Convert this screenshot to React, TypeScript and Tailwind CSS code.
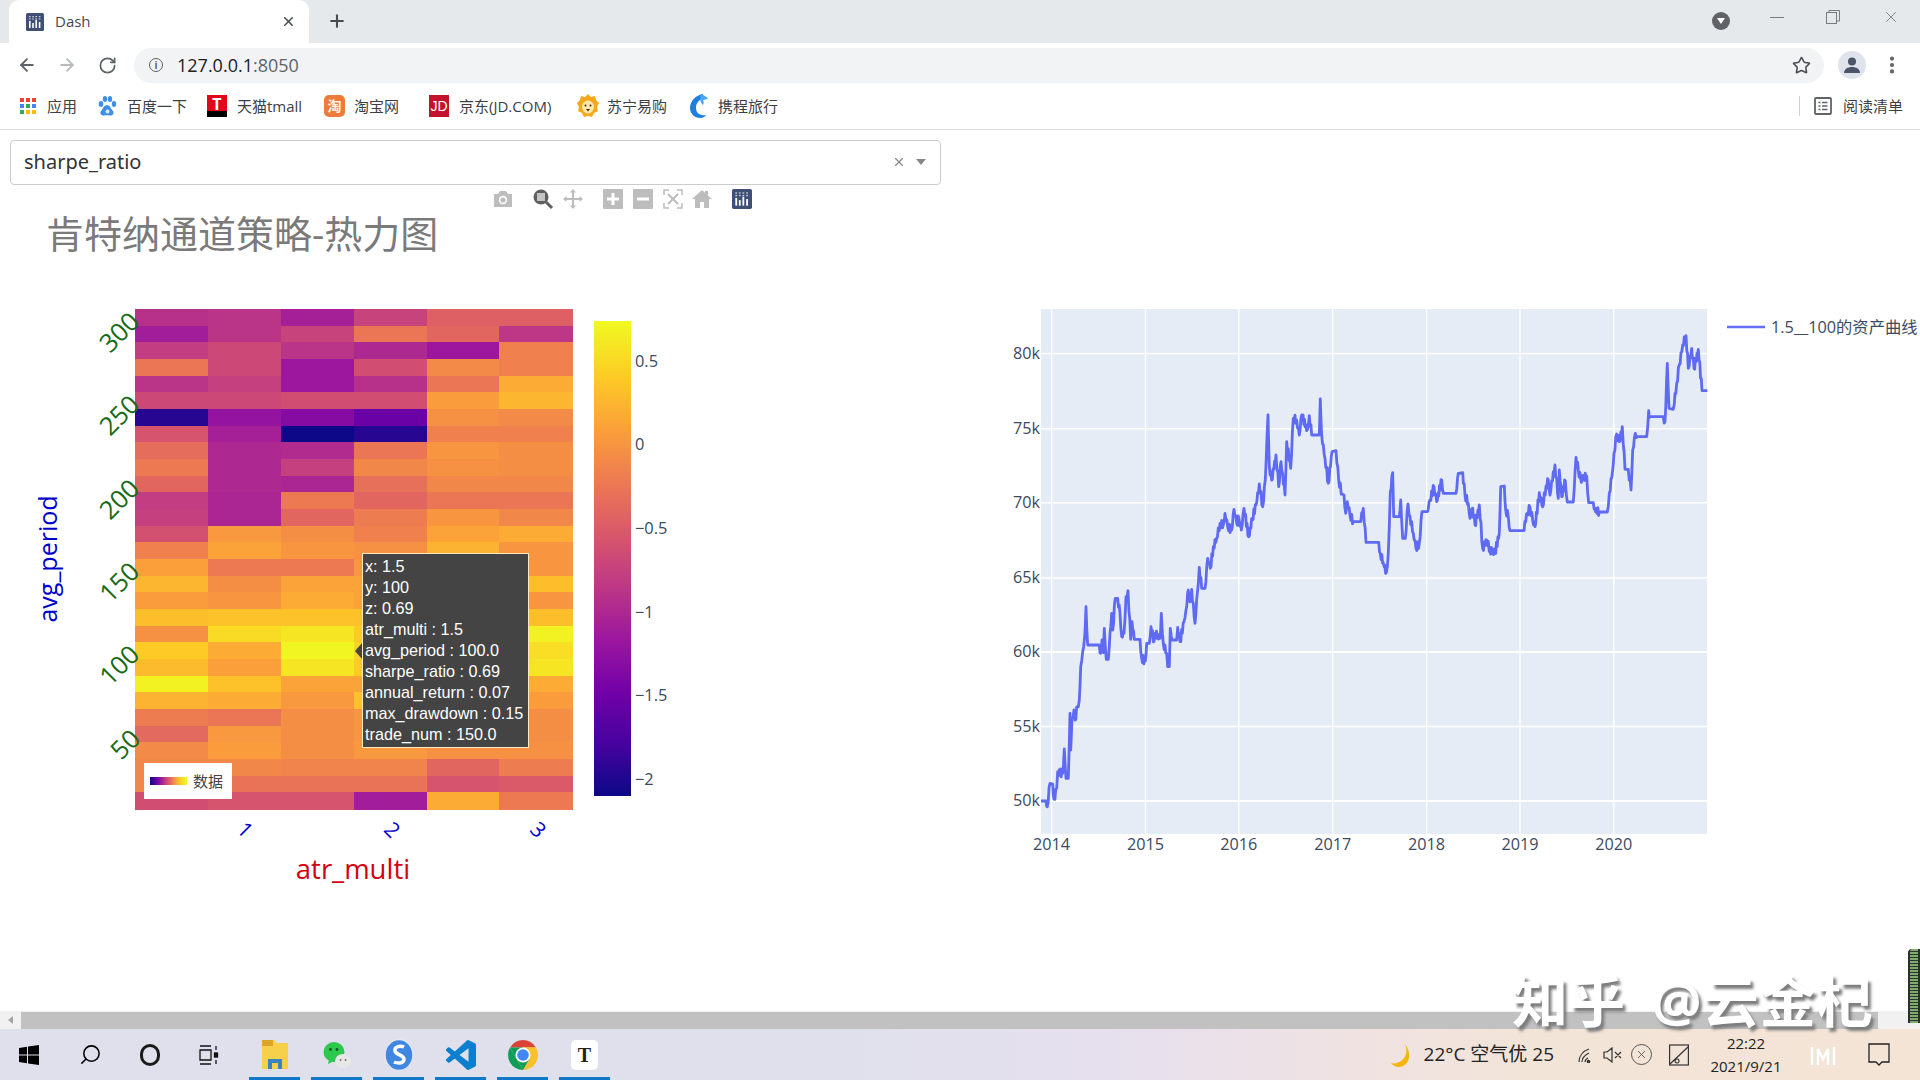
import React from "react";
import { ArrowLeft, ArrowRight, RotateCw, Star, MoreVertical, X, Search, Plus } from "lucide-react";

const PLASMA = ["#0d0887", "#46039f", "#7201a8", "#9c179e", "#bd3786", "#d8576b", "#ed7953", "#fb9f3a", "#fdca26", "#f0f921"];
const STOPS = [0, 0.11, 0.22, 0.33, 0.44, 0.55, 0.66, 0.77, 0.88, 1];
function hex(c: string) {
  return [1, 3, 5].map((i) => parseInt(c.slice(i, i + 2), 16));
}
function plasma(t: number) {
  let i = 0;
  while (i < STOPS.length - 2 && t > STOPS[i + 1]) i++;
  const f = Math.max(0, Math.min(1, (t - STOPS[i]) / (STOPS[i + 1] - STOPS[i])));
  const a = hex(PLASMA[i]);
  const b = hex(PLASMA[i + 1]);
  return `rgb(${a.map((v, k) => Math.round(v + (b[k] - v) * f)).join(",")})`;
}

const HEAT: number[][] = [
  [0.42, 0.43, 0.36, 0.48, 0.58, 0.58],
  [0.35, 0.43, 0.48, 0.65, 0.6, 0.44],
  [0.46, 0.5, 0.43, 0.39, 0.33, 0.68],
  [0.65, 0.5, 0.33, 0.52, 0.71, 0.68],
  [0.43, 0.47, 0.33, 0.42, 0.65, 0.8],
  [0.5, 0.5, 0.52, 0.52, 0.76, 0.83],
  [0.05, 0.31, 0.27, 0.2, 0.73, 0.71],
  [0.54, 0.36, 0.0, 0.05, 0.68, 0.68],
  [0.62, 0.39, 0.4, 0.65, 0.74, 0.72],
  [0.66, 0.39, 0.47, 0.7, 0.73, 0.72],
  [0.6, 0.39, 0.38, 0.63, 0.7, 0.7],
  [0.46, 0.38, 0.66, 0.6, 0.65, 0.65],
  [0.47, 0.38, 0.6, 0.67, 0.74, 0.7],
  [0.53, 0.75, 0.72, 0.68, 0.78, 0.8],
  [0.68, 0.78, 0.74, 0.73, 0.82, 0.74],
  [0.77, 0.66, 0.66, 0.74, 0.76, 0.74],
  [0.83, 0.72, 0.78, 0.78, 0.8, 0.85],
  [0.76, 0.74, 0.8, 0.78, 0.8, 0.74],
  [0.85, 0.86, 0.86, 0.86, 0.88, 0.85],
  [0.73, 0.92, 0.95, 0.88, 0.9, 0.98],
  [0.88, 0.8, 0.99, 0.9, 0.9, 0.93],
  [0.84, 0.77, 0.95, 0.88, 0.9, 0.95],
  [0.98, 0.86, 0.78, 0.78, 0.8, 0.8],
  [0.82, 0.8, 0.75, 0.86, 0.78, 0.76],
  [0.67, 0.65, 0.72, 0.74, 0.74, 0.72],
  [0.61, 0.75, 0.72, 0.74, 0.74, 0.72],
  [0.71, 0.76, 0.72, 0.75, 0.73, 0.73],
  [0.7, 0.7, 0.69, 0.69, 0.6, 0.67],
  [0.7, 0.64, 0.64, 0.64, 0.54, 0.56],
  [0.52, 0.54, 0.54, 0.35, 0.8, 0.66],
];

const SEG_A = [3,1263,18,1263,22,1280,30,1210,38,1212,42,1258,50,1225,53,1175,68,1180,73,1107,78,1195,85,1195,90,1000,92,1110,96,1015,102,990,105,1020,112,980,118,960,122,860,128,815,134,770,138,680,143,795,178,795,182,820,186,780,190,818,193,745,199,838,205,838,210,760,215,700,218,750,226,655,233,655,240,700,245,770,252,760,258,650,264,632,272,778,276,725,283,778,300,778,305,835,316,843,320,790,328,790,333,740,342,785,345,760,360,775,364,700,370,790,380,820,383,860,388,860,391,745,396,780,410,780,413,742,420,785,432,725,438,690,445,630,450,665,455,628,465,730,472,640,478,562,485,625,495,625,503,535,511,565,520,500,530,475,540,430,550,435,555,400,563,440,575,450,582,388,590,430,597,415,604,450,612,385,626,470,637,415,648,375,658,312,668,380,676,300,684,105,688,260,695,300,708,225,716,320];
const SEG_B = [33,245,45,345,50,185,62,265,70,115,80,120,88,165,95,105,112,150,118,107,125,165,148,165,151,57,155,165,165,235,175,310,186,215,198,212,206,300,216,342,222,345,227,400,232,365,240,405,250,425,270,425,280,385,288,487,326,487,331,520,340,548,349,578,355,520,361,335,368,278,371,410,388,410,392,360,398,475,406,475,414,372,420,410,430,460,438,505,448,490,456,395,472,395,480,360,492,320,500,365,515,300,520,340,558,340,565,280,578,278,585,345,595,370,600,415,608,385,615,435,628,375,638,505,650,480,660,510,675,518,688,460,692,320,703,318];
const SEG_C = [47,570,55,590,60,632,100,632,112,580,120,562,128,600,135,620,148,518,158,560,168,498,175,480,180,525,190,455,195,435,205,535,208,450,215,530,226,482,232,546,250,546,258,412,265,450,272,478,290,468,296,548,310,548,315,568,328,576,352,576,358,520,368,450,372,400,380,342,388,365,397,320,405,448,415,448,423,510,428,390,436,340,442,350,470,350,476,272,480,290,520,290,525,305,532,130,537,265,550,268,560,190,568,135,578,75,588,47,595,145,605,85,612,145,625,88,636,212,652,212];

function toPts(seg: number[], ox: number, oy: number): [number, number][] {
  const out: [number, number][] = [];
  for (let i = 0; i < seg.length; i += 2) out.push([ox + seg[i] / 3, oy + seg[i + 1] / 3]);
  return out;
}
function jag(points: [number, number][]) {
  const out: string[] = [];
  let n = 0;
  points.forEach(([x, y], i) => {
    if (i > 0) {
      const [px, py] = points[i - 1];
      const dx = x - px;
      const dy = y - py;
      if (Math.abs(dy) > 1 && dx > 1) {
        const steps = Math.max(2, Math.floor(dx / 0.7));
        for (let s = 1; s < steps; s++) {
          n++;
          const f = s / steps;
          const noise = (1.5 + Math.abs(Math.sin(n * 12.9898)) * 2.5) * (s % 2 ? 1 : -1);
          out.push(`${(px + dx * f).toFixed(1)},${(py + dy * f + noise).toFixed(1)}`);
        }
      }
    }
    out.push(`${x.toFixed(1)},${y.toFixed(1)}`);
  });
  return out.join(" ");
}
const LINE = jag([...toPts(SEG_A, 1040, 380), ...toPts(SEG_B, 1270, 380), ...toPts(SEG_C, 1490, 320)]);

function AppGrid() {
  const c = ["#ea4335", "#ea4335", "#ea4335", "#4285f4", "#34a853", "#4285f4", "#34a853", "#fbbc04", "#fbbc04"];
  return (
    <div className="grid grid-cols-3 gap-[2px] w-[16px]">
      {c.map((col, i) => (
        <span key={i} className="w-[4px] h-[4px]" style={{ background: col }} />
      ))}
    </div>
  );
}

function PlotlyLogo({ size = 18 }: { size?: number }) {
  return (
    <svg width={size} height={size} viewBox="0 0 18 18">
      <rect width="18" height="18" rx="1.5" fill="#3f4f75" />
      <g fill="#fff">
        <rect x="3" y="8" width="1.6" height="7" />
        <rect x="6.2" y="10" width="1.6" height="5" />
        <rect x="9.4" y="7" width="1.6" height="8" />
        <rect x="12.8" y="9" width="1.6" height="6" />
        {[3, 6.2, 9.4, 12.8].map((x) => (
          <g key={x}>
            <rect x={x} y="3" width="1.6" height="1.2" opacity="0.7" />
            <rect x={x} y="5.3" width="1.6" height="1.2" opacity="0.7" />
          </g>
        ))}
      </g>
    </svg>
  );
}

function Baidu() {
  return (
    <svg width="20" height="22" viewBox="0 0 20 22" fill="#3f8fe8">
      <ellipse cx="4" cy="9" rx="2.3" ry="3" />
      <ellipse cx="8" cy="4" rx="2.2" ry="3" />
      <ellipse cx="13" cy="4" rx="2.2" ry="3" />
      <ellipse cx="17" cy="9" rx="2.2" ry="3" />
      <path d="M10 10c-3 0-4 4-6 6-1.500 2 0 5 3 4.500 2-.4 4-.4 6 0 3 .5 4.500-2.500 3-4.500-2-2-3-6-6-6z" />
      <circle cx="10.500" cy="16.500" r="2" fill="#dceafc" />
    </svg>
  );
}

function TmallT() {
  return (
    <div className="w-[20px] h-[22px] bg-[linear-gradient(#e3061b_0_72%,#000_72%)] flex justify-center pt-[1px] text-white font-bold text-[16px] leading-[16px]">
      T
    </div>
  );
}

function Taobao() {
  return (
    <div className="w-[21px] h-[22px] rounded-[5px] bg-[#ef7b3a] flex items-center justify-center text-[#fff2e0] text-[14px] leading-none font-bold">
      淘
    </div>
  );
}

function JD() {
  return (
    <div className="w-[20px] h-[22px] bg-[#c3142b] flex items-center justify-center text-white text-[14px] leading-none font-['Liberation_Sans',sans-serif]">
      JD
    </div>
  );
}

function Suning() {
  return (
    <svg width="22" height="24" viewBox="0 0 22 24">
      <path d="M11 0l3 3 4-1 1 4 3 3-2 4 1 4-4 2-2 4-4-1-4 1-2-4-4-2 1-4-2-4 3-3 1-4 4 1z" fill="#f6a81c" />
      <ellipse cx="11" cy="13" rx="6" ry="6.500" fill="#fde7a8" />
      <circle cx="8.500" cy="11.500" r="1" fill="#3a2a10" />
      <circle cx="13.500" cy="11.500" r="1" fill="#3a2a10" />
      <path d="M9 15h4l-2 2.500z" fill="#3a2a10" />
    </svg>
  );
}

function Ctrip() {
  return (
    <svg width="22" height="26" viewBox="0 0 22 26">
      <path d="M16 1c-7 1-13 7-13 14 0 6 5 10 10 10 3 0 5-1 6-3-6 1-10-2-10-7 0-5 3-8 7-10z" fill="#1f7fe0" />
      <path d="M14 1c3 1 6 3 7 5l-5 1c1 2 1 3 0 5-2-2-4-5-2-11z" fill="#4aa6f5" />
    </svg>
  );
}

function Bookmark({ icon, label, w }: { icon: React.ReactNode; label: string; w: string }) {
  return (
    <div className={`flex items-center shrink-0 ${w}`}>
      {icon}
      <span className="text-[15px] text-[#3c4043] whitespace-nowrap">{label}</span>
    </div>
  );
}

function WeChat() {
  return (
    <svg width="30" height="30" viewBox="0 0 30 30">
      <ellipse cx="12" cy="12" rx="10.500" ry="10" fill="#2dc84d" />
      <path d="M7 19l-1 5 6-3z" fill="#2dc84d" />
      <circle cx="8.500" cy="9.500" r="1.400" fill="#0b5a1d" />
      <circle cx="15" cy="9.500" r="1.400" fill="#0b5a1d" />
      <ellipse cx="21" cy="21" rx="8" ry="7" fill="#e7e7e7" />
      <circle cx="18.500" cy="20" r="1" fill="#777" />
      <circle cx="23.500" cy="20" r="1" fill="#777" />
    </svg>
  );
}

function Chrome() {
  return (
    <svg width="30" height="30" viewBox="-15 -15 30 30">
      <path d="M-12.990 -7.500A15 15 0 0 1 12.990 -7.500L0 -7.500z" fill="#db4437" />
      <path d="M0 -7.500L12.990 -7.500A15 15 0 0 1 0 15L6.500 3.750z" fill="#fbc02d" />
      <path d="M0 15A15 15 0 0 1 -12.990 -7.500L-6.500 3.750z" fill="#0f9d58" />
      <path d="M-12.990 -7.500L0 -7.500L-6.500 3.750z" fill="#0f9d58" />
      <path d="M0 -7.500L12.990 -7.500L6.500 3.750z" fill="#fbc02d" />
      <path d="M0 15L6.500 3.750L-6.500 3.750z" fill="#0f9d58" />
      <circle r="7.500" fill="#fff" />
      <circle r="5.800" fill="#4285f4" />
    </svg>
  );
}

function TaskIcon({ children, active = true, w = "w-[51px]", mr = "mr-[11px]" }: { children: React.ReactNode; active?: boolean; w?: string; mr?: string }) {
  return (
    <div className={`relative flex items-center justify-center h-[51px] ${w} ${mr}`}>
      {children}
      {active && <span className="absolute bottom-0 left-0 right-0 h-[3px] bg-[#0f78c8]" />}
    </div>
  );
}

const CELL_W = 437.3 / 6;
const CELL_H = 500 / 30;

function Heatmap() {
  return (
    <div className="relative w-[960px] h-[610px] shrink-0">
      <svg width="960" height="610" viewBox="0 290 960 610" className="block">
        <defs>
          <linearGradient id="cb" x1="0" y1="1" x2="0" y2="0">
            {PLASMA.map((c, i) => (
              <stop key={i} offset={STOPS[i]} stopColor={c} />
            ))}
          </linearGradient>
        </defs>
        <g shapeRendering="crispEdges">
          {HEAT.map((row, r) =>
            row.map((v, c) => (
              <rect key={`${r}-${c}`} x={135 + c * CELL_W} y={309 + r * CELL_H} width={CELL_W + 0.5} height={CELL_H + 0.5} fill={plasma(v)} />
            ))
          )}
        </g>
        <rect x="594" y="321" width="37" height="475" fill="url(#cb)" />
        {[["0.5", 362], ["0", 445], ["−0.5", 529], ["−1", 613], ["−1.5", 696], ["−2", 780]].map(([t, y]) => (
          <text key={t as string} x="635" y={(y as number) + 5} fontSize="16.4" fill="#3b4a60">
            {t}
          </text>
        ))}
        {[["300", 120, 333], ["250", 120, 416], ["200", 120, 500], ["150", 120, 583], ["100", 120, 666], ["50", 126, 745]].map(([t, x, y]) => (
          <text key={t as string} x={x as number} y={(y as number) + 8} fontSize="25.5" fill="#176b17" textAnchor="middle" transform={`rotate(-45 ${x} ${y})`}>
            {t}
          </text>
        ))}
        {[["1", 245], ["2", 392], ["3", 538]].map(([t, x]) => (
          <text key={t as string} x={x as number} y="837" fontSize="21" fill="#0000cd" textAnchor="middle" transform={`rotate(45 ${x} 830)`}>
            {t}
          </text>
        ))}
        <text x="353" y="879" fontSize="27.5" fill="#d4000f" textAnchor="middle">
          atr_multi
        </text>
        <text x="57" y="559" fontSize="25" fill="#0000cd" textAnchor="middle" transform="rotate(-90 57 559)">
          avg_period
        </text>
      </svg>
      <div className="absolute left-[144px] top-[473px] w-[88px] h-[36px] bg-white flex items-center pl-[6px] gap-[6px]">
        <span className="w-[37px] h-[8px] bg-[linear-gradient(90deg,#0d0887,#7201a8,#bd3786,#ed7953,#fdca26,#f0f921)]" />
        <span className="text-[15px] text-[#444]">数据</span>
      </div>
      <div className="absolute left-[362px] top-[263px] w-[167px] h-[195px] bg-[#444] border-[1.5px] border-[#fde8c0] pl-[2px] pt-[2px] text-white text-[16.2px] leading-[21px] font-['Liberation_Sans',sans-serif] whitespace-nowrap">
        <div>x: 1.5</div>
        <div>y: 100</div>
        <div>z: 0.69</div>
        <div>atr_multi : 1.5</div>
        <div>avg_period : 100.0</div>
        <div>sharpe_ratio : 0.69</div>
        <div>annual_return : 0.07</div>
        <div>max_drawdown : 0.15</div>
        <div>trade_num : 150.0</div>
      </div>
      <span className="absolute left-[355px] top-[353px] w-0 h-0 border-y-[8px] border-y-transparent border-r-[7px] border-r-[#444]" />
    </div>
  );
}

function LineChart() {
  const xs = [[2014, 1051.6], [2015, 1145.5], [2016, 1238.8], [2017, 1332.7], [2018, 1426.6], [2019, 1520], [2020, 1613.8]];
  const ys = [["80k", 353.6], ["75k", 428.7], ["70k", 502.7], ["65k", 578], ["60k", 652], ["55k", 726.5], ["50k", 801]];
  return (
    <svg width="960" height="610" viewBox="960 290 960 610" className="block shrink-0">
      <rect x="1041" y="309" width="666" height="525" fill="#e5ecf6" />
      {xs.map(([t, x]) => (
        <line key={t} x1={x} x2={x} y1="309" y2="834" stroke="#fff" strokeWidth="1.4" />
      ))}
      {ys.map(([t, y]) => (
        <line key={t as string} x1="1041" x2="1707" y1={y as number} y2={y as number} stroke="#fff" strokeWidth="1.4" />
      ))}
      <line x1="1041" x2="1707" y1="652" y2="652" stroke="#fff" strokeWidth="2" />
      <line x1="1041" x2="1707" y1="801" y2="801" stroke="#fff" strokeWidth="2" />
      <polyline points={LINE} fill="none" stroke="#5f6af2" strokeWidth="2.8" strokeLinejoin="round" />
      {ys.map(([t, y]) => (
        <text key={t as string} x="1040" y={(y as number) + 5} fontSize="16.2" fill="#3b4a60" textAnchor="end">
          {t}
        </text>
      ))}
      {xs.map(([t, x]) => (
        <text key={t} x={x} y="850" fontSize="16.2" fill="#3b4a60" textAnchor="middle">
          {t}
        </text>
      ))}
      <line x1="1727" x2="1765" y1="327" y2="327" stroke="#636efa" strokeWidth="2.6" />
      <text x="1771" y="333" fontSize="16.3" fill="#3b4a60">
        1.5__100的资产曲线
      </text>
    </svg>
  );
}

function ModeBar() {
  const g = "#bdbdbd";
  return (
    <div className="absolute left-[493px] top-[4px] flex items-center h-[20px]">
      <svg width="20" height="18" viewBox="0 0 20 18" className="mr-[19px]">
        <path d="M1 4h4l2-3h6l2 3h4v13H1z" fill={g} />
        <circle cx="10" cy="10" r="4.200" fill="#fff" />
        <circle cx="10" cy="10" r="2.600" fill={g} />
      </svg>
      <svg width="22" height="22" viewBox="0 0 22 22" className="mr-[9px]">
        <circle cx="9" cy="9" r="7.500" fill="#5f5f5f" />
        <rect x="5" y="5" width="8" height="8" fill="#c4c4c4" />
        <path d="M14 14l6 6" stroke="#5f5f5f" strokeWidth="3" />
      </svg>
      <svg width="20" height="20" viewBox="0 0 20 20" className="mr-[20px]" fill={g}>
        <path d="M10 0l3 3.500h-2V9h5.500V7L20 10l-3.500 3v-2H11v5.500h2L10 20l-3-3.500h2V11H3.500v2L0 10l3.500-3v2H9V3.500H7z" />
      </svg>
      <svg width="20" height="20" viewBox="0 0 20 20" className="mr-[10px]">
        <rect width="20" height="20" rx="1" fill={g} />
        <path d="M10 4v12M4 10h12" stroke="#fff" strokeWidth="3" />
      </svg>
      <svg width="20" height="20" viewBox="0 0 20 20" className="mr-[10px]">
        <rect width="20" height="20" rx="1" fill={g} />
        <path d="M4 10h12" stroke="#fff" strokeWidth="3" />
      </svg>
      <svg width="20" height="20" viewBox="0 0 20 20" className="mr-[9px]" fill="none" stroke={g} strokeWidth="1.500">
        <path d="M6 1H1v5M14 1h5v5M6 19H1v-5M14 19h5v-5" />
        <path d="M5 5l10 10M15 5L5 15" strokeWidth="2" />
      </svg>
      <svg width="20" height="18" viewBox="0 0 20 18" className="mr-[20px]" fill={g}>
        <path d="M10 0L0 9h3v9h5v-6h4v6h5V9h3l-4-3.600V1h-3v1.700z" />
      </svg>
      <PlotlyLogo size={20} />
    </div>
  );
}

export default function App() {
  return (
    <div className="relative w-[1920px] h-[1080px] overflow-hidden flex flex-col bg-white font-['Open_Sans','Noto_Sans_CJK_SC',sans-serif]">
      {/* tab strip */}
      <div className="h-[43px] bg-[#e6e9ec] flex items-end shrink-0 relative">
        <div className="ml-[9px] w-[300px] h-[43px] bg-white rounded-t-[10px] flex items-center pl-[17px] pr-[13px]">
          <PlotlyLogo size={18} />
          <span className="ml-[11px] text-[15px] text-[#45494d]">Dash</span>
          <X className="ml-auto w-[15px] h-[15px] text-[#45494d]" strokeWidth={2.4} />
        </div>
        <Plus className="absolute left-[327px] top-[11px] w-[20px] h-[20px] text-[#4a4d50]" strokeWidth={2.5} />
        <div className="ml-auto flex items-center h-[43px] pb-[4px]">
          <span className="w-[18px] h-[18px] rounded-full bg-[#5f6368] flex items-center justify-center mr-[40px] mt-[3px]">
            <span className="w-0 h-0 border-x-[4px] border-x-transparent border-t-[6px] border-t-white" />
          </span>
          <span className="w-[14px] h-[1px] bg-[#7a7d80] mr-[42px] mb-[5px]" />
          <svg width="14" height="14" viewBox="0 0 14 14" fill="none" stroke="#7a7d80" className="mr-[42px] mb-[5px]">
            <rect x="0.500" y="2.500" width="10" height="11" />
            <path d="M3 2.500V0.500h10.500V11H10.500" />
          </svg>
          <X className="w-[18px] h-[18px] text-[#7a7d80] mr-[20px] mb-[5px]" strokeWidth={1.2} />
        </div>
      </div>
      {/* toolbar */}
      <div className="h-[47px] flex items-center shrink-0 pb-[3px]">
        <ArrowLeft className="ml-[17px] w-[20px] h-[20px] text-[#5f6368]" strokeWidth={2.2} />
        <ArrowRight className="ml-[20px] w-[20px] h-[20px] text-[#b9bcbf]" strokeWidth={2.2} />
        <RotateCw className="ml-[21px] w-[19px] h-[19px] text-[#5f6368]" strokeWidth={2.2} />
        <div className="ml-[17px] w-[1690px] h-[35px] rounded-full bg-[#f1f3f4] flex items-center pl-[15px] pr-[13px]">
          <span className="w-[14px] h-[14px] rounded-full border-[1.500px] border-[#5f6368] flex items-center justify-center text-[10px] leading-none text-[#5f6368] font-bold">
            i
          </span>
          <span className="ml-[14px] text-[18px] text-[#202124]">
            127.0.0.1<span className="text-[#5f6368]">:8050</span>
          </span>
          <Star className="ml-auto w-[19px] h-[19px] text-[#4a4d50]" strokeWidth={2} />
        </div>
        <span className="ml-[14px] w-[28px] h-[28px] rounded-full bg-[#dfe3ec] flex items-center justify-center overflow-hidden">
          <svg width="20" height="20" viewBox="0 0 20 20" fill="#4b5468">
            <circle cx="10" cy="6.500" r="4" />
            <path d="M2 18c0-4 4-6 8-6s8 2 8 6z" />
          </svg>
        </span>
        <MoreVertical className="ml-[15px] w-[22px] h-[22px] text-[#5f6368]" strokeWidth={2.6} />
      </div>
      {/* bookmarks */}
      <div className="h-[41px] border-b border-[#dadce0] flex items-center shrink-0 -mt-[1px] pl-[20px] pb-[6px]">
        <Bookmark w="w-[77px] gap-[11px]" icon={<AppGrid />} label="应用" />
        <Bookmark w="w-[110px] gap-[10px]" icon={<Baidu />} label="百度一下" />
        <Bookmark w="w-[117px] gap-[10px]" icon={<TmallT />} label="天猫tmall" />
        <Bookmark w="w-[105px] gap-[9px]" icon={<Taobao />} label="淘宝网" />
        <Bookmark w="w-[148px] gap-[10px]" icon={<JD />} label="京东(JD.COM)" />
        <Bookmark w="w-[110px] gap-[8px]" icon={<Suning />} label="苏宁易购" />
        <Bookmark w="w-[100px] gap-[9px]" icon={<Ctrip />} label="携程旅行" />
        <div className="ml-auto flex items-center pr-[17px]">
          <span className="w-[1px] h-[20px] bg-[#d0d2d5] mr-[14px]" />
          <svg width="18" height="18" viewBox="0 0 18 18" fill="none" stroke="#5f6368" strokeWidth="1.800" className="mr-[11px]">
            <rect x="1" y="1" width="16" height="16" rx="1" />
            <path d="M4.500 5.500h2M8 5.500h5.500M4.500 9h2M8 9h5.500M4.500 12.500h2M8 12.500h5.500" strokeWidth="1.400" />
          </svg>
          <span className="text-[15px] text-[#3c4043]">阅读清单</span>
        </div>
      </div>
      {/* page */}
      <div className="flex-1 min-h-0 flex flex-col">
        <div className="mt-[10px] ml-[10px] w-[931px] h-[45px] border border-[#ccc] rounded-[4px] flex items-center pl-[13px] pr-[13px] pb-[2px] shrink-0">
          <span className="text-[20px] text-[#333] font-['Noto_Sans','Noto_Sans_CJK_SC',sans-serif]">sharpe_ratio</span>
          <X className="ml-auto w-[14px] h-[14px] text-[#888]" strokeWidth={2} />
          <span className="ml-[10px] mr-[1px] w-0 h-0 border-x-[5px] border-x-transparent border-t-[6px] border-t-[#888]" />
        </div>
        <div className="relative h-[105px] pl-[46px] pt-[25px] shrink-0">
          <ModeBar />
          <div className="text-[38px] leading-[46px] text-[#7a7a7a]">肯特纳通道策略-热力图</div>
        </div>
        <div className="flex w-[1920px]">
          <Heatmap />
          <LineChart />
        </div>
      </div>
      {/* scrollbar */}
      <div className="h-[18px] bg-[#f1f1f1] flex items-center shrink-0">
        <div className="w-[21px] flex justify-center">
          <span className="w-0 h-0 border-y-[4.500px] border-y-transparent border-r-[5px] border-r-[#a3a3a3]" />
        </div>
        <div className="w-[1857px] h-[17px] bg-[#c1c1c1]" />
      </div>
      {/* taskbar */}
      <div className="h-[51px] shrink-0 flex items-center bg-[linear-gradient(90deg,#dfe0ec_0%,#e0e0ec_45%,#e6e0ee_58%,#efe2e2_70%,#f3e4d8_80%,#f3e4d6_100%)]">
        <div className="flex items-center h-full w-[249px] text-black">
          <svg width="20" height="20" viewBox="0 0 20 20" fill="#000" className="ml-[19px]">
            <path d="M0 3l8-1.200V9.500H0zM9 1.600L20 0v9.500H9zM0 10.500h8v7.700L0 17zM9 10.500h11V20L9 18.400z" />
          </svg>
          <Search className="ml-[40px] w-[23px] h-[23px] scale-x-[-1]" strokeWidth={1.600} />
          <span className="ml-[38px] w-[20px] h-[22px] rounded-full border-[3px] border-[#1a1a1a]" />
          <svg width="20" height="20" viewBox="0 0 20 20" fill="none" stroke="#111" strokeWidth="1.300" className="ml-[39px]">
            <path d="M1 1h11M1 19h11M1 5h11v10H1zM17 1v4M17 8v4M17 15v4" />
            <rect x="15.500" y="8" width="3" height="4" fill="#111" />
          </svg>
        </div>
        <TaskIcon>
          <svg width="28" height="32" viewBox="0 0 28 32">
            <path d="M1 1h12l3 3h11v26H1z" fill="#f6d04a" />
            <path d="M1 1h11v6H1z" fill="#dca52a" />
            <path d="M7 30V20h14v10h-4v-6h-6v6z" fill="#3b82c4" />
          </svg>
        </TaskIcon>
        <TaskIcon>
          <WeChat />
        </TaskIcon>
        <TaskIcon>
          <svg width="30" height="32" viewBox="0 0 30 32">
            <ellipse cx="15" cy="16" rx="14" ry="15.500" fill="#3f87e0" stroke="#e4e6ef" strokeWidth="1.500" />
            <path d="M20 8c-4-2-10 0-9 4 1 4 9 4 9 8 0 4-5 5-10 3" fill="none" stroke="#fff" strokeWidth="3.500" />
          </svg>
        </TaskIcon>
        <TaskIcon>
          <svg width="30" height="30" viewBox="0 0 24 24" fill="#0a7fd0">
            <path d="M23.150 2.587L18.210.21a1.494 1.494 0 0 0-1.705.29l-9.460 8.630-4.120-3.128a.999.999 0 0 0-1.276.057L.327 7.261A1 1 0 0 0 .326 8.740L3.899 12 .326 15.260a1 1 0 0 0 .001 1.479L1.650 17.940a.999.999 0 0 0 1.276.057l4.120-3.128 9.460 8.630a1.492 1.492 0 0 0 1.704.29l4.942-2.377A1.500 1.500 0 0 0 24 20.060V3.939a1.500 1.500 0 0 0-.850-1.352zm-5.146 14.861L10.826 12l7.178-5.448v10.896z" />
          </svg>
        </TaskIcon>
        <TaskIcon>
          <Chrome />
        </TaskIcon>
        <TaskIcon mr="mr-0">
          <span className="w-[27px] h-[30px] rounded-[5px] bg-white flex items-center justify-center text-[20px] leading-none text-[#222] font-['Liberation_Serif',serif] font-bold">
            T
          </span>
        </TaskIcon>
        <div className="ml-auto flex items-center text-[#222] h-full">
          <svg width="24" height="26" viewBox="0 0 24 26" className="mr-[11px]">
            <path d="M15 1c4 6 3 14-3 18-3 2-6 3-10 2 3 4 8 5 12 3 7-3 9-14 1-23z" fill="#f6b40e" />
          </svg>
          <span className="text-[19px] mr-[21px] leading-none">22°C 空气优 25</span>
          <svg width="18" height="16" viewBox="0 0 18 16" fill="none" stroke="#333" strokeWidth="1.200" className="mr-[10px]">
            <path d="M4 15C4 9 8 4 14 2M7 15c0-4 3-7 7-9M10 15c0-2 1-3 3-4" />
            <circle cx="13.500" cy="14.500" r="1.200" fill="#333" />
          </svg>
          <svg width="20" height="16" viewBox="0 0 20 16" fill="none" stroke="#333" strokeWidth="1.200" className="mr-[8px]">
            <path d="M1 5h3l5-4v14l-5-4H1zM12 5l6 6M18 5l-6 6" />
          </svg>
          <span className="w-[21px] h-[21px] rounded-full border border-[#555] flex items-center justify-center mr-[17px]">
            <X className="w-[13px] h-[13px] text-[#555]" strokeWidth={1.600} />
          </span>
          <svg width="20" height="22" viewBox="0 0 20 22" fill="none" stroke="#333" strokeWidth="1.200" className="mr-[11px]">
            <rect x="0.600" y="1" width="18.800" height="20" />
            <path d="M1 20L19 3M8 15a2 2 0 1 0 0.100 0" />
          </svg>
          <div className="w-[92px] flex flex-col items-center text-[15px] leading-[23px] mr-[18px]">
            <span>22:22</span>
            <span>2021/9/21</span>
          </div>
          <svg width="26" height="20" viewBox="0 0 26 20" fill="none" stroke="#fff" strokeWidth="2.500" className="mr-[32px]">
            <path d="M2 20V2M8 20V4l5 10 5-10v16M24 20V2" />
          </svg>
          <svg width="22" height="24" viewBox="0 0 22 24" fill="none" stroke="#222" strokeWidth="1.300" className="mr-[30px]">
            <path d="M1 1h20v18h-7l-3 3-3-3H1z" />
          </svg>
        </div>
      </div>
      {/* watermark & edge meter overlay */}
      <div className="absolute left-[1512px] top-[962px] text-[56px] leading-[76px] font-bold text-white whitespace-nowrap [text-shadow:3px_4px_3px_#7d7d7d] tracking-[1px] [word-spacing:10px]">
        知乎 @云金杞
      </div>
      <div className="absolute left-[1908px] top-[949px] w-[12px] h-[74px] rounded-tl-[4px] border-x-2 border-[#2b2f2f] bg-[repeating-linear-gradient(180deg,#7fae6a_0_2px,#2f3433_2px_3px)]" />
    </div>
  );
}
